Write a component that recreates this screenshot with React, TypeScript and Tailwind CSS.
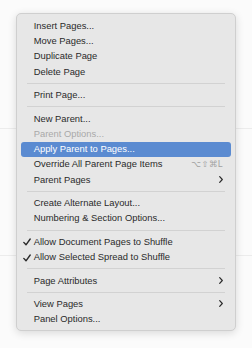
import React from 'react'

type Item =
  | { kind: 'sep' }
  | {
      kind: 'item'
      label: string
      disabled?: boolean
      active?: boolean
      checked?: boolean
      submenu?: boolean
      shortcut?: string
    }

const sep: Item = { kind: 'sep' }
const item = (label: string, extra: Partial<Extract<Item, { kind: 'item' }>> = {}): Item => ({
  kind: 'item',
  label,
  ...extra,
})

const menuItems: Item[] = [
  item('Insert Pages...'),
  item('Move Pages...'),
  item('Duplicate Page'),
  item('Delete Page'),
  sep,
  item('Print Page...'),
  sep,
  item('New Parent...'),
  item('Parent Options...', { disabled: true }),
  item('Apply Parent to Pages...', { active: true }),
  item('Override All Parent Page Items', { shortcut: '⌥⇧⌘L' }),
  item('Parent Pages', { submenu: true }),
  sep,
  item('Create Alternate Layout...'),
  item('Numbering & Section Options...'),
  sep,
  item('Allow Document Pages to Shuffle', { checked: true }),
  item('Allow Selected Spread to Shuffle', { checked: true }),
  sep,
  item('Page Attributes', { submenu: true }),
  sep,
  item('View Pages', { submenu: true }),
  item('Panel Options...'),
]

function Check() {
  return (
    <svg width="8" height="8" viewBox="0 0 8 8" fill="none">
      <path d="M0.8 4.4 L3 6.8 L7.2 1" stroke="#2b2b2b" strokeWidth="1.4" strokeLinecap="round" strokeLinejoin="round" />
    </svg>
  )
}

function Chevron() {
  return (
    <svg width="4" height="7" viewBox="0 0 4 7" fill="none">
      <path d="M0.7 0.7 L3.3 3.5 L0.7 6.3" stroke="#2b2b2b" strokeWidth="1.2" strokeLinecap="round" strokeLinejoin="round" />
    </svg>
  )
}

function MenuRow({ it }: { it: Extract<Item, { kind: 'item' }> }) {
  const color = it.active ? 'text-white' : it.disabled ? 'text-[#a9a9a9]' : 'text-[#2a2a2a]'
  return (
    <div className={`relative mx-[4px] flex h-[15.3px] items-center rounded-[3px] pl-[12.7px] pr-[8px] ${it.active ? 'bg-[#5b8bd1]' : ''}`}>
      {it.checked && (
        <span className="absolute left-[2px] top-[4px]">
          <Check />
        </span>
      )}
      <span className={`flex-1 whitespace-nowrap ${color}`}>{it.label}</span>
      {it.shortcut && (
        <span className="whitespace-nowrap font-['DejaVu_Sans',sans-serif] text-[8.4px] tracking-[0.5px] text-[#a0a0a0]">
          {it.shortcut}
        </span>
      )}
      {it.submenu && <Chevron />}
    </div>
  )
}

export default function App() {
  return (
    <div className="relative h-[348px] w-[252px] overflow-hidden bg-[#fbfbfb] font-['Liberation_Sans',Arial,sans-serif] text-[9.4px]">
      <div className="h-[127.5px]" />
      <div className="h-px bg-[#ececec]" />
      <div className="h-[126.5px]" />
      <div className="h-px bg-[#ececec]" />

      <div className="absolute left-[16px] top-[12.7px] w-[220px] rounded-[5px] border-[0.5px] border-[#cfcfcf] bg-[#e7e7e7] pb-[3px] pt-[4.6px] shadow-[0_2px_9px_rgba(0,0,0,0.14)]">
        {menuItems.map((it, i) =>
          it.kind === 'sep' ? (
            <div key={i} className="flex h-[8.1px] items-center px-[10px]">
              <div className="h-px w-full bg-[#d2d2d2]" />
            </div>
          ) : (
            <MenuRow key={i} it={it} />
          ),
        )}
      </div>
    </div>
  )
}
